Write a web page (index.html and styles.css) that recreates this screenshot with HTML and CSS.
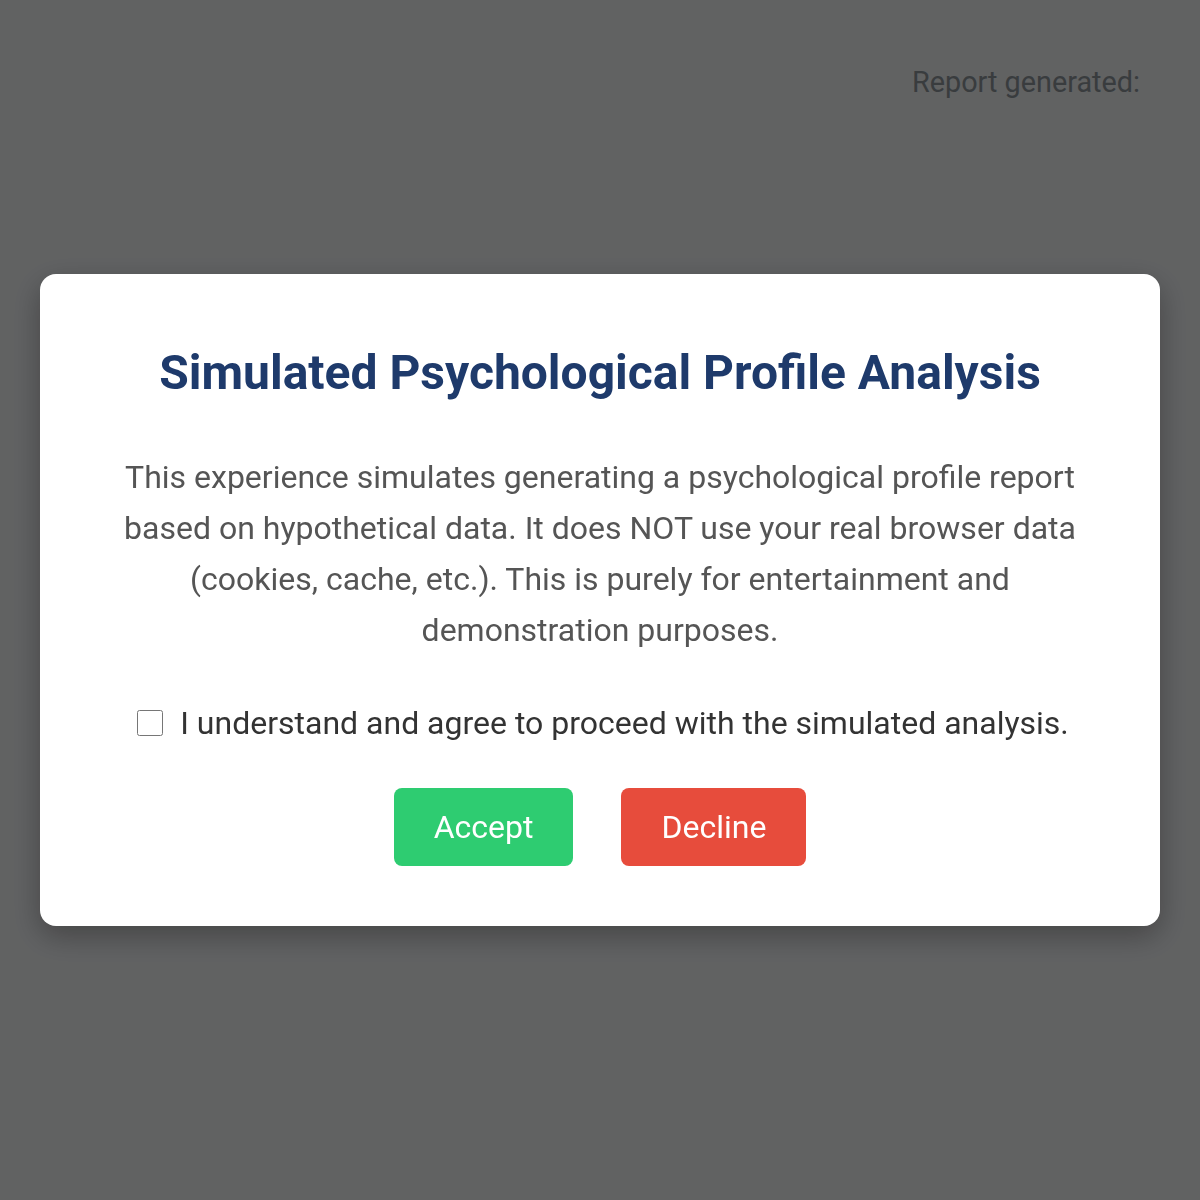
FILE: index.html
```html
<!DOCTYPE html>
<html lang="en">
<head>
    <meta charset="UTF-8">
    <meta name="viewport" content="width=device-width, initial-scale=1.0">
    <title>Simulated Psychological Profile Analysis</title>
    <link rel="stylesheet" href="styles.css">
</head>
<body>

    <!-- Page behind the consent dialog -->
    <header class="report-header">
        <div class="report-date">Report generated: <span id="reportDate"></span></div>
    </header>

    <!-- Consent modal -->
    <div class="modal" id="consentModal">
        <div class="modal-content">
            <h1>Simulated Psychological Profile Analysis</h1>
            <p class="intro">This experience simulates generating a psychological profile report based on hypothetical data. It does NOT use your real browser data (cookies, cache, etc.). This is purely for entertainment and demonstration purposes.</p>
            <label class="agree">
                <input type="checkbox" id="agreeBox">
                <span>I understand and agree to proceed with the simulated analysis.</span>
            </label>
            <div class="buttons">
                <button class="btn btn-accept" id="acceptBtn">Accept</button>
                <button class="btn btn-decline" id="declineBtn">Decline</button>
            </div>
        </div>
    </div>

</body>
</html>
```

FILE: styles.css
```css
/* page */
body {
    font-family: Roboto, "Liberation Sans", sans-serif;
    margin: 0;
    padding: 0;
    background-color: #f2f4f6;
    min-height: 100vh;
}

.report-header {
    display: flex;
    justify-content: flex-end;
    padding: 65px 60px 0;
}

.report-date {
    font-size: 28.8px;
    color: #8f979c;
}

/* modal */
.modal {
    position: fixed;
    top: 0;
    left: 0;
    width: 100%;
    height: 100%;
    background-color: rgba(0, 0, 0, 0.6);
    display: flex;
    justify-content: center;
    align-items: center;
}

.modal-content {
    background-color: #fff;
    width: 1120px;
    box-sizing: border-box;
    padding: 70px 60px 60px;
    border-radius: 16px;
    box-shadow: 0 10px 30px rgba(0, 0, 0, 0.3);
    text-align: center;
}

.modal-content h1 {
    margin: 0 0 50px;
    font-size: 48px;
    font-weight: 700;
    color: #1e3a6b;
    line-height: 1.2;
}

.intro {
    margin: 0 0 47px;
    font-size: 32px;
    line-height: 1.6;
    color: #555;
}

.agree {
    display: flex;
    justify-content: center;
    align-items: center;
    gap: 17px;
    font-size: 32px;
    color: #333;
    margin-bottom: 46px;
}

.agree input {
    width: 26px;
    height: 26px;
    margin: 0 0 0 6px;
}

.buttons {
    display: flex;
    justify-content: center;
    gap: 48px;
}

.btn {
    font-family: inherit;
    font-size: 32px;
    color: #fff;
    border: none;
    border-radius: 8px;
    padding: 20px 40px;
    cursor: pointer;
}

.btn-accept {
    background-color: #2ecc71;
}

.btn-decline {
    background-color: #e74c3c;
}
```
